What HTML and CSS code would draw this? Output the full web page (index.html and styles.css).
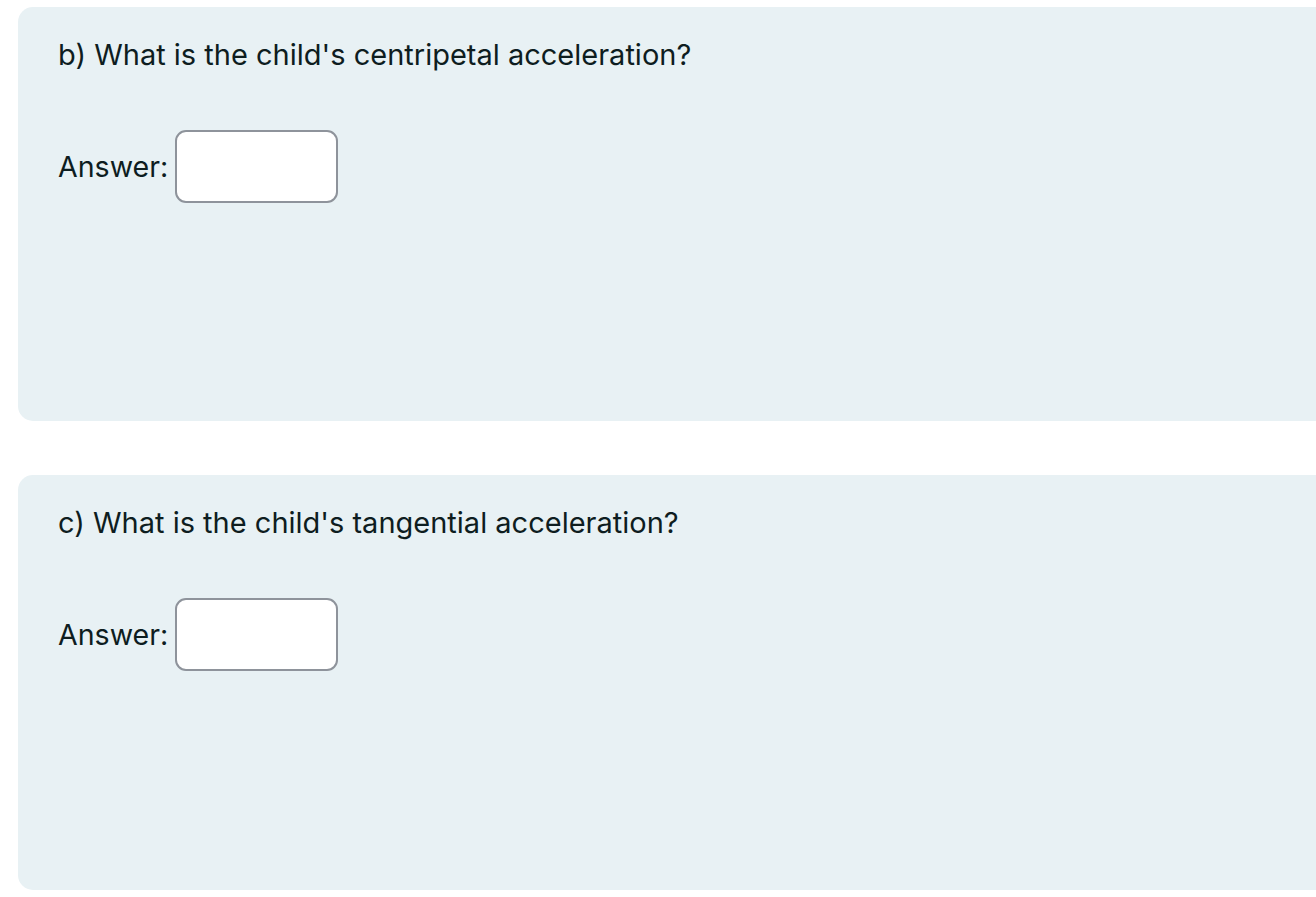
FILE: index.html
```html
<!DOCTYPE html>
<html lang="en">
<head>
<meta charset="utf-8">
<title>Questions</title>
<link rel="stylesheet" href="styles.css">
</head>
<body>
<main class="page">
  <section class="panel panel-b">
    <p class="question">b) What is the child's centripetal acceleration?</p>
    <div class="answer-row">
      <label class="answer-label" for="ans-b">Answer:</label>
      <input class="answer-input" id="ans-b" type="text">
    </div>
  </section>
  <section class="panel panel-c">
    <p class="question">c) What is the child's tangential acceleration?</p>
    <div class="answer-row">
      <label class="answer-label" for="ans-c">Answer:</label>
      <input class="answer-input" id="ans-c" type="text">
    </div>
  </section>
</main>
</body>
</html>
```
FILE: styles.css
```css
html, body {
  margin: 0;
  padding: 0;
  overflow: hidden;
  background: #ffffff;
}
body {
  font-family: Inter, "Noto Sans", sans-serif;
  color: #0e1d1f;
}
.page {
  display: flex;
  flex-direction: column;
  gap: 54px;
  padding: 7px 0 0 18px;
  margin-right: -40px;
}
.panel {
  box-sizing: border-box;
  background: #e8f1f4;
  border-radius: 15px;
  padding: 28px 40px;
  display: flex;
  flex-direction: column;
  gap: 55px;
}
.panel-b { height: 414px; }
.panel-c { height: 415px; }
.question {
  margin: 0;
  font-size: 29px;
  line-height: 40px;
}
.answer-row {
  display: flex;
  align-items: center;
  gap: 7px;
}
.answer-label {
  font-size: 28.6px;
  line-height: 40px;
}
.answer-input {
  box-sizing: border-box;
  width: 163px;
  height: 73px;
  border: 2px solid #8e939b;
  border-radius: 11px;
  background: #ffffff;
  margin: 0;
  padding: 0 10px;
  font: inherit;
}
```
